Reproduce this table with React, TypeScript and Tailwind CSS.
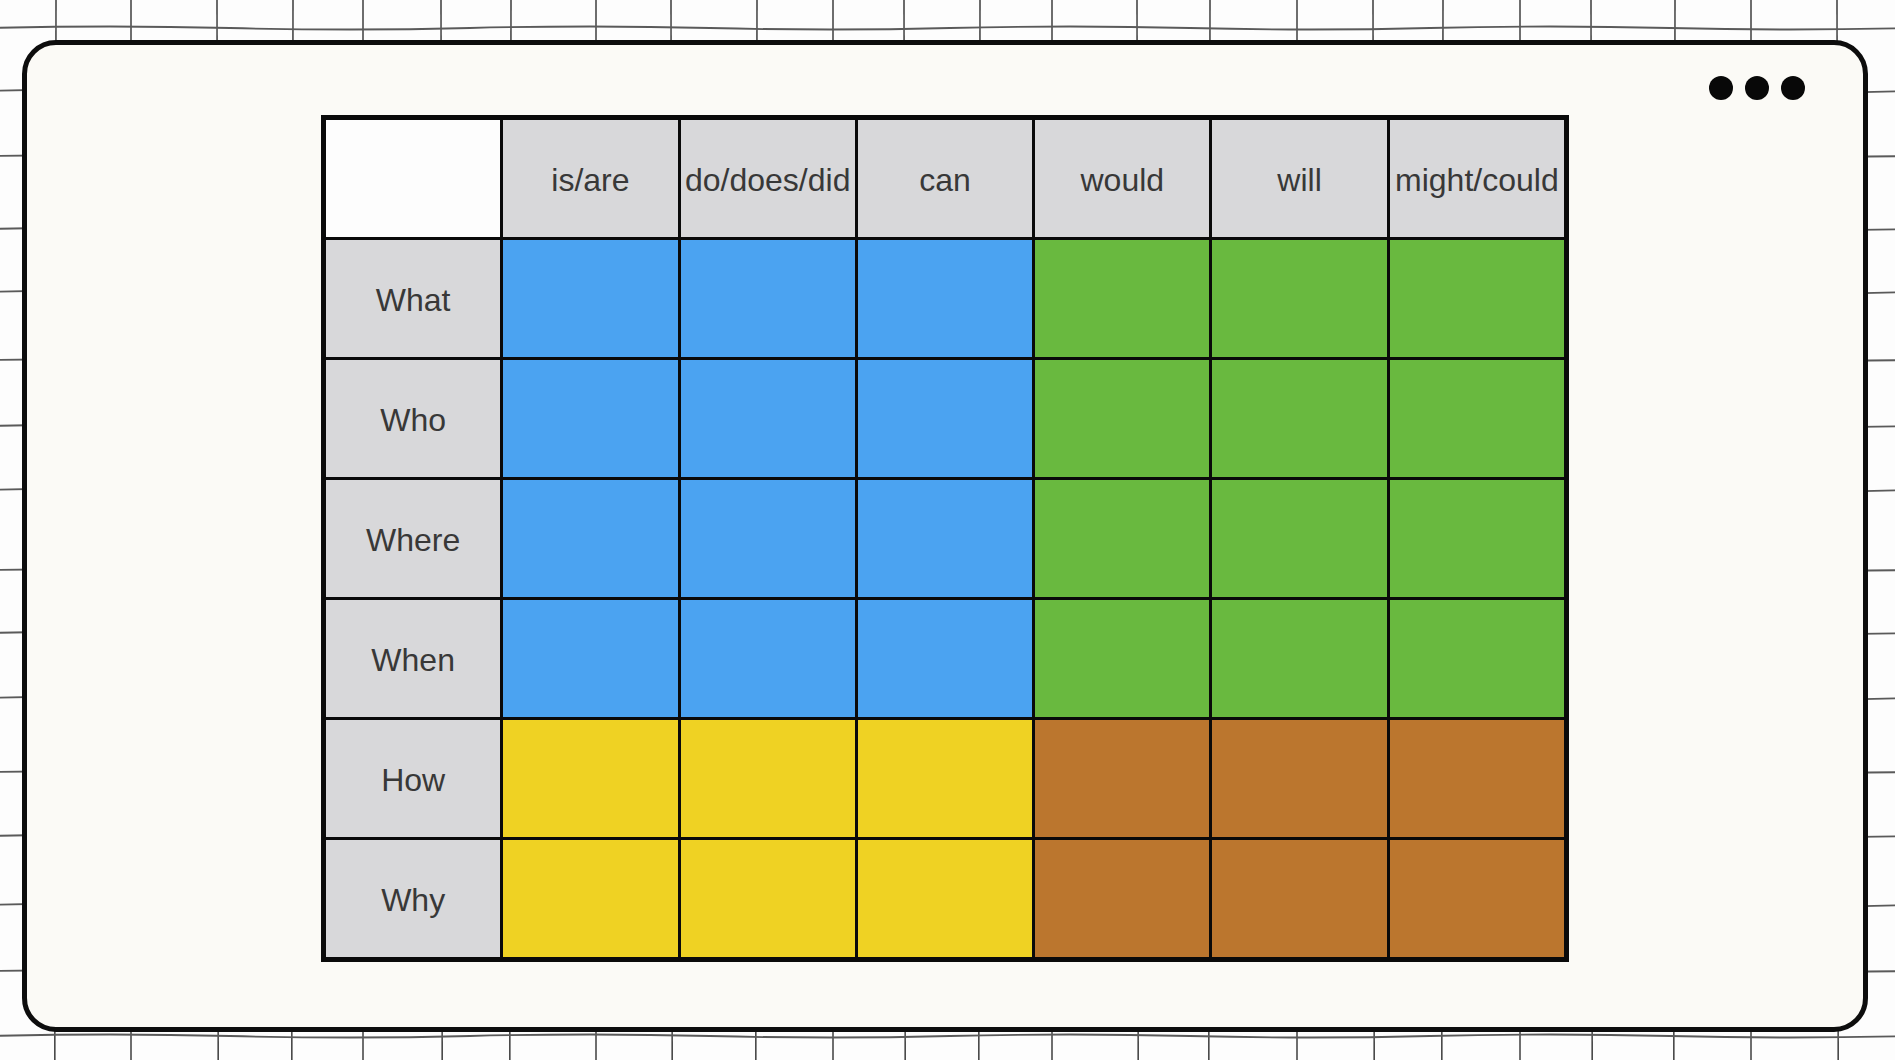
import React from "react";

const vx = [56, 131, 217, 293, 363, 441, 511, 596, 671, 757, 833, 904, 980, 1052, 1137, 1210, 1297, 1373, 1443, 1520, 1591, 1675, 1751, 1837];
const hy = [28, 91, 156, 229, 292, 360, 426, 490, 570, 633, 698, 772, 836, 905, 971, 1036];

function wavy(y: number, i: number) {
  const amp = [1.5, -2, 1, -1.5, 2, -1][i % 6];
  let d = `M -10 ${y}`;
  const seg = 240;
  for (let x = -10; x < 1905; x += seg) {
    const a = ((Math.floor(x / seg) + i) % 2 === 0 ? amp : -amp);
    d += ` Q ${x + seg / 2} ${y + a * 2} ${x + seg} ${y}`;
  }
  return d;
}

function GridBg() {
  return (
    <svg className="absolute inset-0" width="1895" height="1060" viewBox="0 0 1895 1060">
      {vx.map((x, i) => (
        <path
          key={"v" + i}
          d={`M ${x} -5 L ${x + ((i % 3) - 1) * 1.2} 1065`}
          stroke="#4a4a4a"
          strokeWidth="1.6"
          fill="none"
        />
      ))}
      {hy.map((y, i) => (
        <path key={"h" + i} d={wavy(y, i)} stroke="#5a5a5a" strokeWidth="1.8" fill="none" />
      ))}
    </svg>
  );
}

type Cell = { t?: string; c: string };

const header = ["is/are", "do/does/did", "can", "would", "will", "might/could"];
const rows = ["What", "Who", "Where", "When", "How", "Why"];

const BLUE = "bg-[#4ba3f1]";
const GREEN = "bg-[#69b93f]";
const YELLOW = "bg-[#efd223]";
const BROWN = "bg-[#bb762e]";
const GRAY = "bg-[#d8d8da]";

function colorFor(r: number, c: number) {
  if (r < 4) return c < 3 ? BLUE : GREEN;
  return c < 3 ? YELLOW : BROWN;
}

export default function App() {
  const cells: Cell[] = [];
  cells.push({ c: "bg-[#fdfdfd]" });
  header.forEach((h) => cells.push({ t: h, c: GRAY }));
  rows.forEach((r, ri) => {
    cells.push({ t: r, c: GRAY });
    for (let ci = 0; ci < 6; ci++) cells.push({ c: colorFor(ri, ci) });
  });

  return (
    <div
      className="relative w-[1895px] h-[1060px] overflow-hidden bg-[#fdfdfd]"
      style={{ fontFamily: '"Liberation Sans", Arial, sans-serif' }}
    >
      <GridBg />
      <div className="relative pt-[40px] pl-[22px]">
        <div className="relative w-[1846px] h-[992px] rounded-[34px] border-[5px] border-[#0d0d0d] bg-[#fbfaf6] flex items-center justify-center">
          <div className="absolute top-[31px] right-[58px] flex gap-[12px]">
            <div className="w-[24px] h-[24px] rounded-full bg-[#080808]" />
            <div className="w-[24px] h-[24px] rounded-full bg-[#080808]" />
            <div className="w-[24px] h-[24px] rounded-full bg-[#080808]" />
          </div>
          <div className="mt-[5px] grid grid-cols-7 grid-rows-7 gap-[3px] w-[1248px] h-[847px] border-[5px] border-[#0a0a0a] bg-[#0a0a0a]">
            {cells.map((cell, i) => (
              <div
                key={i}
                className={`${cell.c} flex items-center justify-center pt-[2px] text-[32px] text-[#383838] leading-none`}
              >
                {cell.t}
              </div>
            ))}
          </div>
        </div>
      </div>
    </div>
  );
}
